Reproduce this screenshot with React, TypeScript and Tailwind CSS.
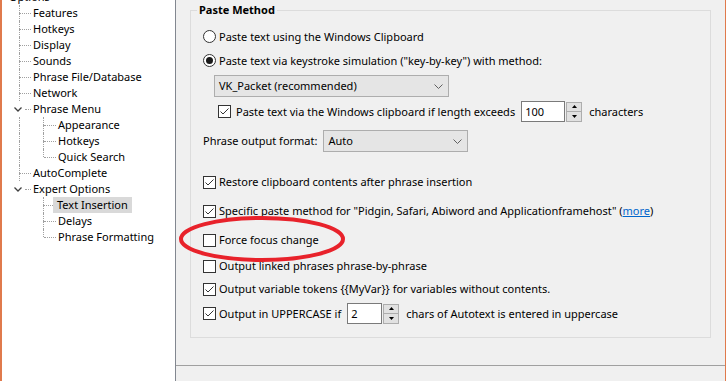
import * as React from 'react';

type Line = 'full' | 'top' | 'none';

type Node = {
  label: string;
  level: 0 | 1 | 2;
  v1?: Line;
  v2?: Line;
  chevron?: boolean;
  selected?: boolean;
};

const tree: Node[] = [
  { label: 'Options', level: 0 },
  { label: 'Features', level: 1, v1: 'full' },
  { label: 'Hotkeys', level: 1, v1: 'full' },
  { label: 'Display', level: 1, v1: 'full' },
  { label: 'Sounds', level: 1, v1: 'full' },
  { label: 'Phrase File/Database', level: 1, v1: 'full' },
  { label: 'Network', level: 1, v1: 'full' },
  { label: 'Phrase Menu', level: 1, chevron: true },
  { label: 'Appearance', level: 2, v1: 'full', v2: 'full' },
  { label: 'Hotkeys', level: 2, v1: 'full', v2: 'full' },
  { label: 'Quick Search', level: 2, v1: 'full', v2: 'top' },
  { label: 'AutoComplete', level: 1, v1: 'full' },
  { label: 'Expert Options', level: 1, chevron: true },
  { label: 'Text Insertion', level: 2, v1: 'none', v2: 'full', selected: true },
  { label: 'Delays', level: 2, v1: 'none', v2: 'full' },
  { label: 'Phrase Formatting', level: 2, v1: 'none', v2: 'top' },
];

function VLine({ kind }: { kind: Line }) {
  return (
    <div className="flex w-px shrink-0 flex-col">
      <div className={kind === 'none' ? 'h-2' : 'h-2 border-l border-dotted border-[#a0a0a0]'} />
      <div className={kind === 'full' ? 'h-2 border-l border-dotted border-[#a0a0a0]' : 'h-2'} />
    </div>
  );
}

function Chevron() {
  return (
    <svg width="10" height="16" viewBox="0 0 10 16" className="shrink-0">
      <path d="M1.5 6.5 L5 10 L8.5 6.5" fill="none" stroke="#404040" strokeWidth="1.3" />
    </svg>
  );
}

function TreeRow({ node }: { node: Node }) {
  if (node.level === 0) {
    return <div className="flex h-4 items-center pl-[7px]">{node.label}</div>;
  }
  if (node.level === 1) {
    return (
      <div className="flex h-4 items-stretch">
        {node.chevron ? (
          <>
            <div className="w-[11px] shrink-0" />
            <Chevron />
            <div className="ml-[2px] w-[6px] shrink-0 self-center border-t border-dotted border-[#a0a0a0]" />
          </>
        ) : (
          <>
            <div className="w-[17px] shrink-0" />
            <VLine kind={node.v1 ?? 'none'} />
            <div className="w-[11px] shrink-0 self-center border-t border-dotted border-[#a0a0a0]" />
          </>
        )}
        <span className="ml-[2px] flex items-center whitespace-nowrap">{node.label}</span>
      </div>
    );
  }
  return (
    <div className="flex h-4 items-stretch">
      <div className="w-[17px] shrink-0" />
      <VLine kind={node.v1 ?? 'none'} />
      <div className="w-[23px] shrink-0" />
      <VLine kind={node.v2 ?? 'none'} />
      <div
        className={
          node.selected
            ? 'w-[9px] shrink-0 self-center border-t border-dotted border-[#a0a0a0]'
            : 'w-[12px] shrink-0 self-center border-t border-dotted border-[#a0a0a0]'
        }
      />
      <span
        className={
          node.selected
            ? 'flex items-center whitespace-nowrap bg-[#d9d9d9] pl-[4px] pr-[4px]'
            : 'ml-[2px] flex items-center whitespace-nowrap'
        }
      >
        {node.label}
      </span>
    </div>
  );
}

function CheckBox({ checked }: { checked?: boolean }) {
  return (
    <span className="flex h-[13px] w-[13px] shrink-0 items-center justify-center border border-[#333333] bg-white">
      {checked && (
        <svg width="11" height="11" viewBox="0 0 11 11">
          <path d="M1.5 5.5 L4 8 L9.5 2.5" fill="none" stroke="#333333" strokeWidth="1" />
        </svg>
      )}
    </span>
  );
}

function Radio({ checked }: { checked?: boolean }) {
  return (
    <span className="flex h-[13px] w-[13px] shrink-0 items-center justify-center rounded-full border border-[#333333] bg-white">
      {checked && <span className="h-[7px] w-[7px] rounded-full bg-[#1a1a1a]" />}
    </span>
  );
}

function DropArrow() {
  return (
    <svg width="9" height="5" viewBox="0 0 9 5">
      <path d="M0.5 0.5 L4.5 4.5 L8.5 0.5" fill="none" stroke="#606060" strokeWidth="1" />
    </svg>
  );
}

function Select({ value, className }: { value: string; className: string }) {
  return (
    <div
      className={`flex h-[22px] items-center justify-between border border-[#adadad] bg-[#e5e5e5] pl-[4px] pr-[5px] ${className}`}
    >
      <span>{value}</span>
      <DropArrow />
    </div>
  );
}

function Spin({ value, className }: { value: string; className: string }) {
  return (
    <div className="flex items-center">
      <div className={`flex h-[21px] items-center border border-[#7a7a7a] bg-white pl-[3px] ${className}`}>
        {value}
      </div>
      <div className="ml-px flex h-[20px] w-[16px] flex-col">
        <div className="flex flex-1 items-center justify-center border border-[#adadad] bg-[#e1e1e1]">
          <svg width="5" height="3" viewBox="0 0 5 3">
            <path d="M0 3 L2.5 0 L5 3 Z" fill="#000" />
          </svg>
        </div>
        <div className="flex flex-1 items-center justify-center border border-t-0 border-[#adadad] bg-[#e1e1e1]">
          <svg width="5" height="3" viewBox="0 0 5 3">
            <path d="M0 0 L2.5 3 L5 0 Z" fill="#000" />
          </svg>
        </div>
      </div>
    </div>
  );
}

function CheckRow({ checked, children, className }: { checked?: boolean; children: React.ReactNode; className: string }) {
  return (
    <div className={`flex items-center gap-[3px] whitespace-nowrap ${className}`}>
      <CheckBox checked={checked} />
      {children}
    </div>
  );
}

export default function App() {
  return (
    <div className="relative flex h-[381px] w-[726px] overflow-hidden bg-[#f0f0f0] font-['Noto_Sans',sans-serif] text-[11px] leading-4 text-black">
      <div className="w-[2px] shrink-0 bg-[#e07a4c]" />

      {/* tree */}
      <div className="w-[174px] shrink-0 overflow-hidden border-r border-[#828790] bg-white">
        <div className="-mt-[11px] flex flex-col">
          {tree.map((n, i) => (
            <TreeRow key={i} node={n} />
          ))}
        </div>
      </div>

      {/* page */}
      <div className="flex w-[549px] shrink-0 flex-col">
        <div className="h-[365px] px-[14px] pt-[2px]">
          <fieldset className="h-[336px] border border-[#dcdcdc]">
            <legend className="ml-[6px] px-[2px] font-bold">Paste Method</legend>
            <div className="flex flex-col pl-[12px]">
              <div className="mt-[10px] flex h-[17px] items-center gap-[3px]">
                <Radio />
                <span>Paste text using the Windows Clipboard</span>
              </div>
              <div className="mt-[7px] flex h-[17px] items-center gap-[3px] whitespace-nowrap">
                <Radio checked />
                <span>Paste text via keystroke simulation ("key-by-key") with method:</span>
              </div>
              <Select value="VK_Packet (recommended)" className="ml-[11px] mt-[6px] w-[235px]" />
              <div className="ml-[15px] mt-[4px] flex h-[21px] items-center whitespace-nowrap">
                <CheckBox checked />
                <span className="ml-[5px]">Paste text via the Windows clipboard if length exceeds</span>
                <div className="ml-[6px]">
                  <Spin value="100" className="w-[44px]" />
                </div>
                <span className="ml-[7px]">characters</span>
              </div>
              <div className="mt-[8px] flex h-[22px] items-center whitespace-nowrap">
                <span>Phrase output format:</span>
                <Select value="Auto" className="ml-[6px] w-[145px]" />
              </div>
              <CheckRow checked className="mt-[22px] h-4">
                <span>Restore clipboard contents after phrase insertion</span>
              </CheckRow>
              <CheckRow checked className="mt-[13px] h-4">
                <span>
                  Specific paste method for "Pidgin, Safari, Abiword and Applicationframehost" (<span className="text-[#0066cc] underline">more</span>)
                </span>
              </CheckRow>
              <CheckRow className="mt-[13px] h-4">
                <span>Force focus change</span>
              </CheckRow>
              <CheckRow className="mt-[10px] h-4">
                <span>Output linked phrases phrase-by-phrase</span>
              </CheckRow>
              <CheckRow checked className="mt-[7px] h-4">
                <span>Output variable tokens {'{{MyVar}}'} for variables without contents.</span>
              </CheckRow>
              <CheckRow checked className="mt-[6px] h-[21px]">
                <span>Output in UPPERCASE if</span>
                <div className="ml-[3px]">
                  <Spin value="2" className="w-[35px]" />
                </div>
                <span className="ml-[4px]">chars of Autotext is entered in uppercase</span>
              </CheckRow>
            </div>
          </fieldset>
        </div>
        <div className="flex-1 border-t border-[#a0a0a0]" />
      </div>

      <div className="w-px shrink-0 bg-[#e07a4c]" />

      {/* annotation */}
      <svg className="pointer-events-none absolute left-[178px] top-[214px]" width="170" height="50" viewBox="0 0 170 50">
        <ellipse cx="84" cy="25" rx="81" ry="21" fill="none" stroke="#e8222b" strokeWidth="4" />
      </svg>
    </div>
  );
}
